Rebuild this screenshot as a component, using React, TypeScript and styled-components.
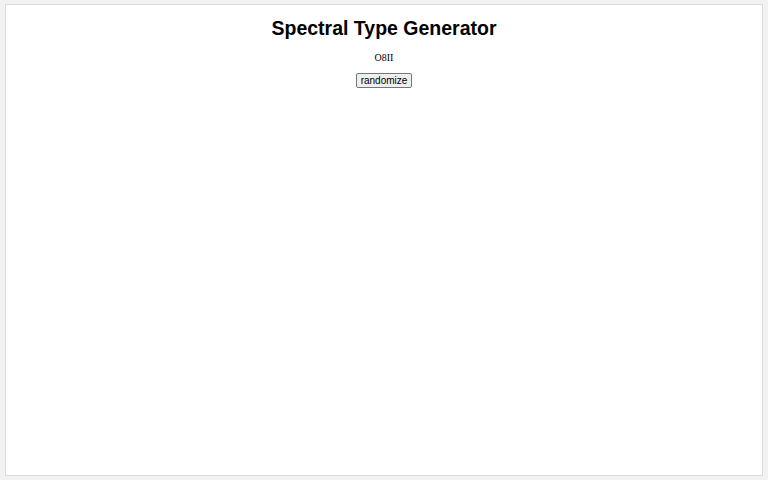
import React, { useState } from "react";
import styled, { createGlobalStyle } from "styled-components";

const GlobalStyle = createGlobalStyle`
  html, body {
    margin: 0;
    padding: 0;
    background: #f2f2f2;
  }
  #root {
    padding: 4px 5px;
  }
`;

const Card = styled.div`
  box-sizing: border-box;
  height: 472px;
  background: #ffffff;
  border: 1px solid #dcdcdc;
  display: flex;
  flex-direction: column;
  align-items: center;
  padding-top: 13px;
`;

const Title = styled.h1`
  margin: 0;
  font-family: "Liberation Sans", Arial, sans-serif;
  font-size: 19.5px;
  font-weight: bold;
  line-height: 20px;
  color: #000;
`;

const Result = styled.div`
  margin-top: 14px;
  font-family: "Liberation Serif", "Times New Roman", serif;
  font-size: 10px;
  line-height: 12px;
  color: #000;
`;

const Button = styled.button`
  margin-top: 9px;
  font-family: "Liberation Sans", Arial, sans-serif;
  font-size: 10px;
  padding: 1px 4px;
  color: #000;
  background: #efefef;
  border: 1px solid #767676;
  border-radius: 2px;
`;

const classes = ["O", "B", "A", "F", "G", "K", "M"];
const lum = ["I", "II", "III", "IV", "V"];

function randomType() {
  const c = classes[Math.floor(Math.random() * classes.length)];
  const n = Math.floor(Math.random() * 10);
  const l = lum[Math.floor(Math.random() * lum.length)];
  return `${c}${n}${l}`;
}

export default function App() {
  const [type, setType] = useState("O8II");

  return (
    <>
      <GlobalStyle />
      <Card>
        <Title>Spectral Type Generator</Title>
        <Result>{type}</Result>
        <Button onClick={() => setType(randomType())}>randomize</Button>
      </Card>
    </>
  );
}
